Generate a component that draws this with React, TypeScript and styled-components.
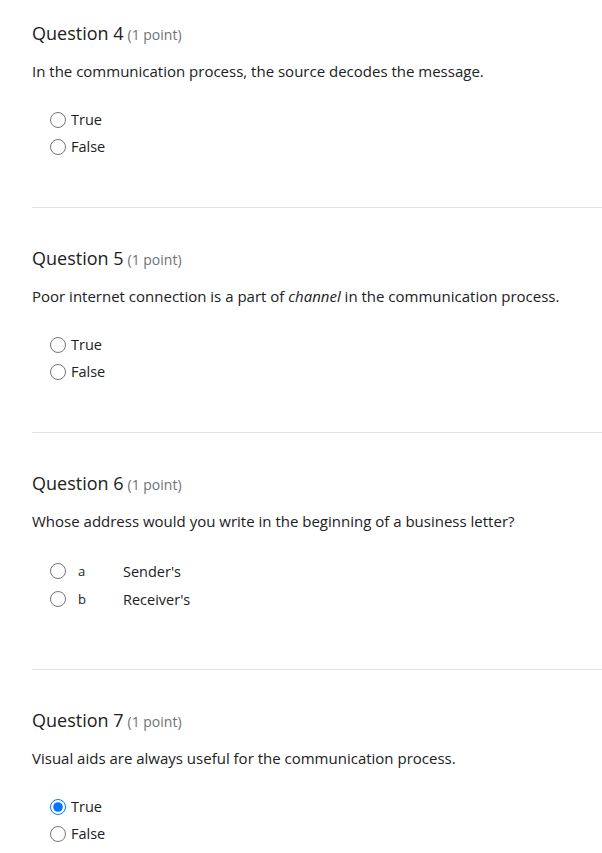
import React from "react";
import styled, { createGlobalStyle } from "styled-components";

const Global = createGlobalStyle`
  html, body { margin: 0; padding: 0; background: #ffffff; }
  body { font-family: "Open Sans", "Noto Sans", sans-serif; color: #202122; }
`;

const Page = styled.div`
  padding: 21px 0 0 32px;
  display: flex;
  flex-direction: column;
`;

const Section = styled.section`
  display: flex;
  flex-direction: column;
`;

const Heading = styled.h2`
  margin: 0;
  font-size: 18px;
  line-height: 24px;
  font-weight: 400;
  color: #202122;
  display: flex;
  align-items: baseline;
  gap: 4px;
`;

const Points = styled.span`
  font-size: 14px;
  color: #6e7376;
`;

const Prompt = styled.p`
  margin: 14px 0 0;
  font-size: 15px;
  line-height: 20px;
  color: #202122;
`;

const Options = styled.div`
  margin: 25px 0 0 18px;
  display: flex;
  flex-direction: column;
`;

const OptionRow = styled.label`
  height: 27px;
  display: flex;
  align-items: center;
  gap: 5px;
  font-size: 14.5px;
  color: #202122;
`;

const Radio = styled.input.attrs({ type: "radio" })`
  width: 16px;
  height: 16px;
  margin: 0;
`;

const Table = styled.div`
  margin: 26px 0 0 18px;
  display: grid;
  grid-template-columns: 16px 57px auto;
  grid-auto-rows: 28px;
  align-items: center;
  font-size: 14.5px;
  color: #202122;
`;

const Letter = styled.span`
  padding-left: 12px;
  font-size: 13px;
`;

const Divider = styled.hr<{ $gap: number }>`
  margin: ${(p) => p.$gap}px 0 38px;
  border: 0;
  border-top: 1px solid #e3e3e3;
  width: 100%;
`;

type Q = {
  n: number;
  prompt: React.ReactNode;
  kind: "tf" | "mc";
  checked?: string;
};

const questions: Q[] = [
  { n: 4, prompt: "In the communication process, the source decodes the message.", kind: "tf" },
  {
    n: 5,
    prompt: (
      <>
        Poor internet connection is a part of <em>channel</em> in the communication process.
      </>
    ),
    kind: "tf",
  },
  { n: 6, prompt: "Whose address would you write in the beginning of a business letter?", kind: "mc" },
  { n: 7, prompt: "Visual aids are always useful for the communication process.", kind: "tf", checked: "True" },
];

export default function App() {
  return (
    <>
      <Global />
      <Page>
        {questions.map((q, i) => (
          <Section key={q.n}>
            <Heading>
              Question {q.n}
              <Points>(1 point)</Points>
            </Heading>
            <Prompt>{q.prompt}</Prompt>
            {q.kind === "tf" ? (
              <Options>
                {["True", "False"].map((o) => (
                  <OptionRow key={o}>
                    <Radio name={`q${q.n}`} defaultChecked={q.checked === o} />
                    {o}
                  </OptionRow>
                ))}
              </Options>
            ) : (
              <Table>
                <Radio name={`q${q.n}`} />
                <Letter>a</Letter>
                <span>Sender's</span>
                <Radio name={`q${q.n}`} />
                <Letter>b</Letter>
                <span>Receiver's</span>
              </Table>
            )}
            {i < questions.length - 1 && <Divider $gap={q.kind === "mc" ? 56 : 47} />}
          </Section>
        ))}
      </Page>
    </>
  );
}
